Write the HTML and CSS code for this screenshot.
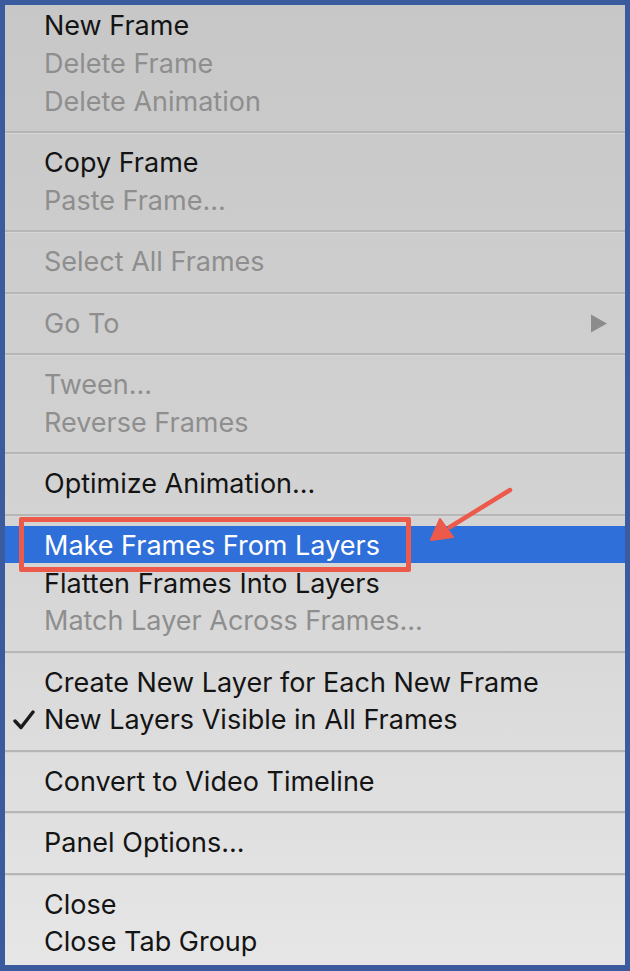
FILE: index.html
```html
<!DOCTYPE html>
<html>
<head>
<meta charset="utf-8">
<link rel="stylesheet" href="styles.css">
</head>
<body>
<div class="frame">
  <div class="menu">
    <div class="item"><span class="check"></span><span class="label">New Frame</span></div>
    <div class="item disabled"><span class="check"></span><span class="label">Delete Frame</span></div>
    <div class="item disabled"><span class="check"></span><span class="label">Delete Animation</span></div>
    <div class="sep"></div>
    <div class="item"><span class="check"></span><span class="label">Copy Frame</span></div>
    <div class="item disabled"><span class="check"></span><span class="label">Paste Frame...</span></div>
    <div class="sep"></div>
    <div class="item disabled"><span class="check"></span><span class="label">Select All Frames</span></div>
    <div class="sep"></div>
    <div class="item disabled"><span class="check"></span><span class="label">Go To</span>
      <svg class="submenu" width="18" height="19" viewBox="0 0 18 19"><polygon points="1,0.5 17,9.5 1,18.5" fill="#8c8c8c"/></svg>
    </div>
    <div class="sep"></div>
    <div class="item disabled"><span class="check"></span><span class="label">Tween...</span></div>
    <div class="item disabled"><span class="check"></span><span class="label">Reverse Frames</span></div>
    <div class="sep"></div>
    <div class="item"><span class="check"></span><span class="label">Optimize Animation...</span></div>
    <div class="sep"></div>
    <div class="item selected"><span class="check"></span><span class="label">Make Frames From Layers</span></div>
    <div class="item"><span class="check"></span><span class="label">Flatten Frames Into Layers</span></div>
    <div class="item disabled"><span class="check"></span><span class="label">Match Layer Across Frames...</span></div>
    <div class="sep"></div>
    <div class="item"><span class="check"></span><span class="label">Create New Layer for Each New Frame</span></div>
    <div class="item"><span class="check"><svg width="22" height="20" viewBox="0 0 22 20"><polyline points="2,11 8,17.5 20,2" fill="none" stroke="#1a1a1a" stroke-width="3.4" stroke-linecap="round" stroke-linejoin="round"/></svg></span><span class="label">New Layers Visible in All Frames</span></div>
    <div class="sep"></div>
    <div class="item"><span class="check"></span><span class="label">Convert to Video Timeline</span></div>
    <div class="sep"></div>
    <div class="item"><span class="check"></span><span class="label">Panel Options...</span></div>
    <div class="sep"></div>
    <div class="item"><span class="check"></span><span class="label">Close</span></div>
    <div class="item"><span class="check"></span><span class="label">Close Tab Group</span></div>
  </div>
  <div class="callout-box"></div>
  <svg class="callout-arrow" width="100" height="70" viewBox="0 0 100 70">
    <line x1="80" y1="10" x2="20" y2="47" stroke="#ec5a4b" stroke-width="4.5" stroke-linecap="round"/>
    <polygon points="1,60 10,39 23,57" fill="#ec5a4b" stroke="#ec5a4b" stroke-width="2" stroke-linejoin="round"/>
  </svg>
</div>
</body>
</html>
```
FILE: styles.css
```css
html, body {
  margin: 0;
  padding: 0;
}
body {
  width: 630px;
  height: 971px;
  overflow: hidden;
  font-family: Inter, "Noto Sans", "Liberation Sans", sans-serif;
}
.frame {
  position: relative;
  box-sizing: border-box;
  width: 630px;
  height: 971px;
  border-style: solid;
  border-color: #3b5b9f;
  border-width: 5px 5px 6px 5px;
  background: linear-gradient(to bottom, #c7c7c7 0%, #d2d2d2 50%, #e6e6e6 100%);
}
.menu {
  display: flex;
  flex-direction: column;
  padding-top: 1px;
}
.item {
  height: 37.67px;
  display: flex;
  align-items: center;
  padding-top: 2px;
  box-sizing: border-box;
  padding-right: 17px;
  font-size: 27px;
  color: #141414;
  white-space: nowrap;
}
.item.disabled {
  color: #8e8e8e;
}
.item.selected {
  background: #2f6fd9;
  color: #ffffff;
}
.check {
  width: 39px;
  flex: 0 0 39px;
  display: flex;
  justify-content: flex-end;
  padding-right: 9px;
  box-sizing: border-box;
}
.label {
  flex: 1;
}
.submenu {
  display: block;
}
.sep {
  height: 23.83px;
  box-sizing: border-box;
  padding-top: 12px;
}
.sep::before {
  content: "";
  display: block;
  height: 2px;
  background: #b6b6b6;
  border-bottom: 1px solid #d6d6d6;
}
.callout-box {
  position: absolute;
  left: 14px;
  top: 512px;
  width: 392px;
  height: 55px;
  box-sizing: border-box;
  border: 5px solid #ec5a4b;
  border-radius: 2px;
}
.callout-arrow {
  position: absolute;
  left: 425px;
  top: 475px;
}
```
